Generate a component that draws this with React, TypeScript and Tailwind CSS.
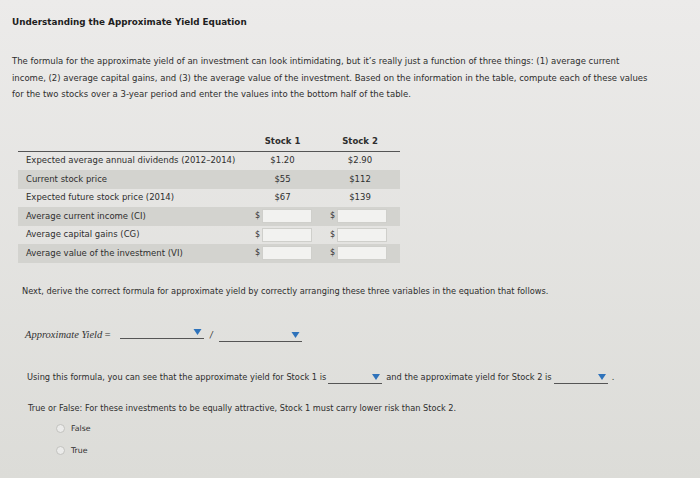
import React from "react";

function Drop({ w, big }: { w: string; big?: boolean }) {
  return (
    <span className={`inline-flex items-end justify-end border-b border-[#555] h-[11px] ${w}`}>
      <svg width={big ? 9 : 8} height={6} viewBox="0 0 8 6" className="mb-[3px] mr-[2px]">
        <polygon points="0,0 8,0 4,6" fill="#2f73bb" />
      </svg>
    </span>
  );
}

function Cell() {
  return (
    <div className="flex items-center h-full pl-[10px]">
      <span className="text-[8px] w-[7px]">$</span>
      <div className="w-[50px] h-[14px] bg-[#f2f2f0] border border-[#cfcfcb]" />
    </div>
  );
}

export default function App() {
  const rows: { label: string; s1?: string; s2?: string; shade: boolean }[] = [
    { label: "Expected average annual dividends (2012–2014)", s1: "$1.20", s2: "$2.90", shade: false },
    { label: "Current stock price", s1: "$55", s2: "$112", shade: true },
    { label: "Expected future stock price (2014)", s1: "$67", s2: "$139", shade: false },
    { label: "Average current income (CI)", shade: true },
    { label: "Average capital gains (CG)", shade: false },
    { label: "Average value of the investment (VI)", shade: true },
  ];
  return (
    <div className="w-[700px] h-[478px] overflow-hidden bg-gradient-to-b from-[#ecebea] to-[#dcdcd8] text-[#2e2e2e] font-['DejaVu_Sans',sans-serif]">
      <div className="pl-[12px] pt-[16px]">
        <h1 className="text-[8.8px] font-bold leading-[12px] text-[#1e1e1e]">Understanding the Approximate Yield Equation</h1>
        <p className="mt-[25px] text-[8.5px] leading-[16.5px] w-[640px]">
          The formula for the approximate yield of an investment can look intimidating, but it’s really just a function of three things: (1) average current income, (2) average capital gains, and (3) the average value of the investment. Based on the information in the table, compute each of these values for the two stocks over a 3-year period and enter the values into the bottom half of the table.
        </p>
      </div>

      <div className="ml-[18px] mt-[30px] w-[382px] text-[8.5px]">
        <div className="grid grid-cols-[227px_75px_80px] h-[19px] items-center border-b border-[#555] font-bold">
          <div />
          <div className="text-center">Stock 1</div>
          <div className="text-center">Stock 2</div>
        </div>
        {rows.map((r) => (
          <div
            key={r.label}
            className={`grid grid-cols-[227px_75px_80px] h-[18.5px] items-center ${r.shade ? "bg-[#d3d3cf]" : ""}`}
          >
            <div className="pl-[8px] whitespace-nowrap">{r.label}</div>
            {r.s1 ? <div className="text-center">{r.s1}</div> : <Cell />}
            {r.s2 ? <div className="text-center">{r.s2}</div> : <Cell />}
          </div>
        ))}
      </div>

      <p className="ml-[22px] mt-[22px] text-[8.25px] leading-[12px]">
        Next, derive the correct formula for approximate yield by correctly arranging these three variables in the equation that follows.
      </p>

      <div className="ml-[25px] mt-[29px] flex items-end h-[16px]">
        <span className="italic font-['Liberation_Serif',serif] text-[10.5px] leading-[14px] w-[86px] flex justify-between text-[#333]">
          <span>Approximate Yield</span>
          <span>=</span>
        </span>
        <span className="ml-[9px]"><Drop w="w-[84px]" big /></span>
        <span className="mx-[6px] text-[8px] italic">/</span>
        <Drop w="w-[83px]" big />
      </div>

      <div className="ml-[27px] mt-[29px] flex items-end text-[8.25px] h-[13px]">
        <span>Using this formula, you can see that the approximate yield for Stock 1 is</span>
        <span className="ml-[2px]"><Drop w="w-[54px]" /></span>
        <span className="ml-[4px]">and the approximate yield for Stock 2 is</span>
        <span className="ml-[2px]"><Drop w="w-[54px]" /></span>
        <span className="ml-[4px]">.</span>
      </div>

      <p className="ml-[28px] mt-[18px] text-[8.2px] leading-[12px]">
        True or False: For these investments to be equally attractive, Stock 1 must carry lower risk than Stock 2.
      </p>

      <div className="ml-[56px] mt-[9px] flex flex-col gap-[10px] text-[7.8px]">
        {["False", "True"].map((t) => (
          <label key={t} className="flex items-center gap-[6px] h-[12px]">
            <span className="w-[9px] h-[9px] rounded-full border border-[#c2c2bf] bg-[#ebebea]" />
            <span>{t}</span>
          </label>
        ))}
      </div>
    </div>
  );
}
